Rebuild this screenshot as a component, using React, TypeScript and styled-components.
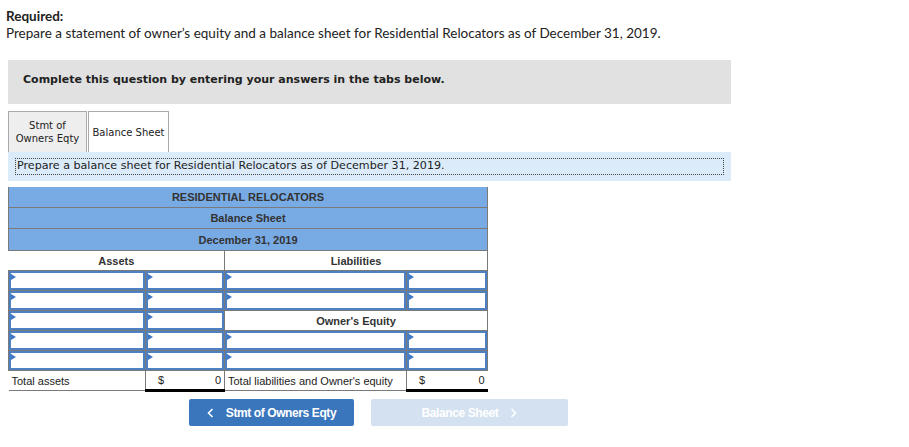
import React from "react";
import styled, { createGlobalStyle } from "styled-components";

const GlobalStyle = createGlobalStyle`
  body {
    margin: 0;
    background: #fff;
    font-family: "Liberation Sans", Arial, sans-serif;
    color: #222;
  }
`;

const Page = styled.div`
  width: 909px;
  height: 447px;
  padding: 8px 0 0 6px;
  box-sizing: border-box;
  overflow: hidden;
`;

const Required = styled.div`
  font-family: "Lato", sans-serif;
  font-size: 13.5px;
  line-height: 17px;
  color: #222;

  b {
    font-weight: 700;
  }
`;

const Panel = styled.div`
  margin: 18px 0 0 2px;
  width: 723px;
`;

const Banner = styled.div`
  height: 44px;
  box-sizing: border-box;
  padding: 0 0 6px 15px;
  background: #e1e1e1;
  display: flex;
  align-items: center;
  font-family: "DejaVu Sans", Verdana, sans-serif;
  font-size: 11px;
  font-weight: bold;
  color: #222;
`;

const Tabs = styled.div`
  display: flex;
  margin-top: 7px;
  gap: 1px;
`;

const Tab = styled.div<{ $active?: boolean }>`
  width: ${(p) => (p.$active ? 81 : 79)}px;
  height: 41px;
  box-sizing: border-box;
  border: 1px solid #aaa;
  border-bottom: none;
  background: ${(p) => (p.$active ? "#fff" : "#eee")};
  display: flex;
  align-items: center;
  justify-content: center;
  text-align: center;
  font-family: "DejaVu Sans", Verdana, sans-serif;
  font-size: 10px;
  line-height: 13px;
  color: #222;
`;

const Instruction = styled.div`
  background: #dbebf9;
  height: 29px;
  display: flex;
  align-items: center;
  padding: 0 7px;
`;

const Focus = styled.div`
  flex: 1;
  border: 1px dotted #444;
  height: 15px;
  line-height: 14px;
  padding-left: 1px;
  font-family: "DejaVu Sans", Verdana, sans-serif;
  font-size: 11.1px;
  color: #222;
`;

const Sheet = styled.table`
  border-collapse: collapse;
  margin-top: 6px;
  width: 479px;
  table-layout: fixed;
  font-family: "Liberation Sans", Arial, sans-serif;
  font-size: 11px;
  color: #222;
`;

const TitleCell = styled.td<{ $h: number }>`
  background: #78aae3;
  border: 1px solid #7a7a7a;
  border-top: none;
  text-align: center;
  height: ${(p) => p.$h}px;
  padding: 0;
  font-weight: bold;
  color: #333;
`;

const HeadCell = styled.td<{ $left?: boolean; $right?: boolean; $top?: boolean }>`
  text-align: center;
  font-weight: bold;
  color: #333;
  height: 19px;
  padding: 0;
  border-left: ${(p) => (p.$left ? "1px solid #7a7a7a" : "none")};
  border-right: ${(p) => (p.$right ? "1px solid #7a7a7a" : "none")};
  border-top: ${(p) => (p.$top ? "1px solid #7a7a7a" : "none")};
`;

const InputCell = styled.td`
  border: 1px solid #7a7a7a;
  padding: 0;
  height: 19px;
`;

const Field = styled.div`
  position: relative;
  height: 15px;
  border: 2px solid #4c80c1;

  &::before {
    content: "";
    position: absolute;
    left: 0;
    top: 1px;
    border-left: 5px solid #3f78c4;
    border-top: 3px solid transparent;
    border-bottom: 3px solid transparent;
  }
`;

const TotalLabel = styled.td<{ $boxed?: boolean }>`
  height: 18px;
  padding: 0 3px;
  border-bottom: 1px solid #7a7a7a;
  border-left: ${(p) => (p.$boxed ? "1px solid #7a7a7a" : "none")};
  border-right: ${(p) => (p.$boxed ? "1px solid #7a7a7a" : "none")};
  white-space: nowrap;
`;

const TotalAmount = styled.td`
  height: 18px;
  padding: 0 3px 0 0;
  border-left: 1px solid #7a7a7a;
  border-bottom: 3px solid #000;
`;

const Amount = styled.div`
  display: flex;
  justify-content: space-between;
  padding-left: 12px;
`;

const Nav = styled.div`
  display: flex;
  gap: 17px;
  margin: 7px 0 0 183px;
`;

const NavButton = styled.div<{ $disabled?: boolean; $w: number }>`
  width: ${(p) => p.$w}px;
  height: 27px;
  border-radius: 2px;
  background: ${(p) => (p.$disabled ? "#d4e1f0" : "#3a76bc")};
  color: #fff;
  display: flex;
  align-items: center;
  justify-content: center;
  gap: 12px;
  font-family: "Liberation Sans", Arial, sans-serif;
  font-size: 12px;
  font-weight: bold;
  letter-spacing: -0.4px;
`;

const Chevron = ({ dir }: { dir: "left" | "right" }) => (
  <svg width="7" height="10" viewBox="0 0 7 10">
    <path
      d={dir === "left" ? "M5.5 1 L1.5 5 L5.5 9" : "M1.5 1 L5.5 5 L1.5 9"}
      fill="none"
      stroke="#fff"
      strokeWidth="1.6"
    />
  </svg>
);

const InputRow = ({ right = true }: { right?: boolean }) => (
  <tr>
    <InputCell><Field /></InputCell>
    <InputCell><Field /></InputCell>
    {right ? (
      <>
        <InputCell><Field /></InputCell>
        <InputCell><Field /></InputCell>
      </>
    ) : (
      <HeadCell colSpan={2} $left $right $top>
        Owner's Equity
      </HeadCell>
    )}
  </tr>
);

export default function App() {
  return (
    <Page>
      <GlobalStyle />
      <Required>
        <b>Required:</b>
        <br />
        Prepare a statement of owner’s equity and a balance sheet for Residential Relocators as of December 31, 2019.
      </Required>

      <Panel>
        <Banner>Complete this question by entering your answers in the tabs below.</Banner>
        <Tabs>
          <Tab>
            Stmt of
            <br />
            Owners Eqty
          </Tab>
          <Tab $active>Balance Sheet</Tab>
        </Tabs>
        <Instruction>
          <Focus>Prepare a balance sheet for Residential Relocators as of December 31, 2019.</Focus>
        </Instruction>

        <Sheet>
          <colgroup>
            <col style={{ width: 137 }} />
            <col style={{ width: 79 }} />
            <col style={{ width: 182 }} />
            <col style={{ width: 81 }} />
          </colgroup>
          <tbody>
            <tr><TitleCell colSpan={4} $h={20}>RESIDENTIAL RELOCATORS</TitleCell></tr>
            <tr><TitleCell colSpan={4} $h={20}>Balance Sheet</TitleCell></tr>
            <tr><TitleCell colSpan={4} $h={21}>December 31, 2019</TitleCell></tr>
            <tr>
              <HeadCell colSpan={2}>Assets</HeadCell>
              <HeadCell colSpan={2} $left $right>Liabilities</HeadCell>
            </tr>
            <InputRow />
            <InputRow />
            <InputRow right={false} />
            <InputRow />
            <InputRow />
            <tr>
              <TotalLabel>Total assets</TotalLabel>
              <TotalAmount><Amount><span>$</span><span>0</span></Amount></TotalAmount>
              <TotalLabel $boxed>Total liabilities and Owner's equity</TotalLabel>
              <TotalAmount><Amount><span>$</span><span>0</span></Amount></TotalAmount>
            </tr>
          </tbody>
        </Sheet>
      </Panel>

      <Nav>
        <NavButton $w={165}>
          <Chevron dir="left" />
          Stmt of Owners Eqty
        </NavButton>
        <NavButton $w={197} $disabled>
          Balance Sheet
          <Chevron dir="right" />
        </NavButton>
      </Nav>
    </Page>
  );
}
